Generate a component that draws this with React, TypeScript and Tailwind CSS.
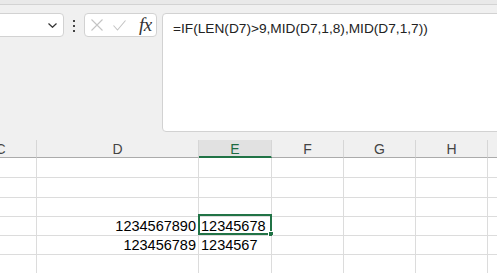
import React from 'react';

const cols = [
  { name: 'C', w: 'w-[72px]' },
  { name: 'D', w: 'w-[162px]' },
  { name: 'E', w: 'w-[73px]' },
  { name: 'F', w: 'w-[72px]' },
  { name: 'G', w: 'w-[72px]' },
  { name: 'H', w: 'w-[72px]' },
  { name: '', w: 'w-[72px]' },
];

const rowHeights = ['h-[20px]', 'h-[20px]', 'h-[19px]', 'h-[19px]', 'h-[19px]', 'h-[19px]'];

const data: Record<string, { d: string; e: string }> = {
  '3': { d: '1234567890', e: '12345678' },
  '4': { d: '123456789', e: '1234567' },
};

const App: React.FC = () => {
  return (
    <div
      className="w-[497px] h-[273px] overflow-hidden bg-[#f0f0f0] text-black"
      style={{ fontFamily: '"Liberation Sans", Arial, sans-serif' }}
    >
      {/* Ribbon edge */}
      <div className="h-[5px] bg-[#e9e9e9] border-b border-[#d3d3d3]" />

      {/* Name box / fx / formula bar */}
      <div className="flex items-start pt-[8px]">
        <div className="shrink-0 -ml-[8px] w-[72px] h-[24px] bg-white border border-[#d2d2d2] rounded-[4px] flex items-center justify-end pr-[6px]">
          <svg width="9" height="5" viewBox="0 0 9 5" className="mt-[1px]">
            <path d="M0.5 0.5 L4.5 4.3 L8.5 0.5" fill="none" stroke="#333" strokeWidth="1.2" />
          </svg>
        </div>
        <div className="shrink-0 ml-[9px] mt-[7px] w-[2px] flex flex-col gap-[3px]">
          <div className="w-[2px] h-[2px] bg-[#444]" />
          <div className="w-[2px] h-[2px] bg-[#444]" />
          <div className="w-[2px] h-[2px] bg-[#444]" />
        </div>
        <div className="shrink-0 ml-[9px] w-[73px] h-[24px] bg-white border border-[#d2d2d2] rounded-[4px] flex items-center pl-[6px]">
          <svg width="12" height="12" viewBox="0 0 12 12">
            <path d="M0.5 0.5 L11.5 11.5 M11.5 0.5 L0.5 11.5" stroke="#c4c4c4" strokeWidth="1.1" fill="none" />
          </svg>
          <svg width="13" height="11" viewBox="0 0 13 11" className="ml-[10px]">
            <path d="M0.5 5.5 L4.5 10 L12.5 0.5" stroke="#c4c4c4" strokeWidth="1.1" fill="none" />
          </svg>
          <span
            className="ml-[13px] italic text-[19px] leading-[18px] text-[#333] tracking-[-0.5px]"
            style={{ fontFamily: '"Liberation Serif", "Times New Roman", serif' }}
          >
            fx
          </span>
        </div>
        <div className="shrink-0 ml-[5px] w-[345px] h-[119px] bg-white border border-[#d2d2d2] rounded-l-[4px] pl-[10px] pt-[2px]">
          <span className="text-[13.7px] leading-[16px] text-[#222]">
            =IF(LEN(D7)&gt;9,MID(D7,1,8),MID(D7,1,7))
          </span>
        </div>
      </div>

      {/* Column headers */}
      <div className="mt-[8px] -ml-[35px] flex">
        {cols.map((c, i) => {
          const sel = c.name === 'E';
          return (
            <div
              key={i}
              className={`shrink-0 ${c.w} h-[18px] border-r border-[#d6d6d6] flex items-center justify-center text-[14px] leading-[17px] ${
                sel
                  ? 'bg-[#e1e1e1] border-b-2 border-b-[#217346] text-[#1d6b41]'
                  : 'border-b border-b-[#ababab] text-[#444]'
              }`}
            >
              <span className="pt-[2px]">{c.name}</span>
            </div>
          );
        })}
      </div>

      {/* Grid */}
      <div className="-ml-[35px] bg-white">
        {rowHeights.map((h, r) => (
          <div key={r} className="flex">
            {cols.map((c, i) => {
              const row = data[String(r)];
              const isSel = r === 3 && c.name === 'E';
              return (
                <div
                  key={i}
                  className={`relative shrink-0 ${c.w} ${h} border-r border-b border-[#dcdcdc] flex items-end text-[14.5px] leading-[18px] ${
                    c.name === 'D' ? 'justify-end pr-[2px]' : 'pl-[2px]'
                  }`}
                >
                  {row && c.name === 'D' && <span>{row.d}</span>}
                  {row && c.name === 'E' && <span>{row.e}</span>}
                  {isSel && (
                    <>
                      <div className="absolute -left-[1px] -top-[3px] w-[74px] h-[21px] border-2 border-[#217346]" />
                      <div className="absolute left-[69px] top-[14px] w-[6px] h-[6px] bg-[#217346] border border-white" />
                    </>
                  )}
                </div>
              );
            })}
          </div>
        ))}
      </div>
    </div>
  );
};

export default App;
